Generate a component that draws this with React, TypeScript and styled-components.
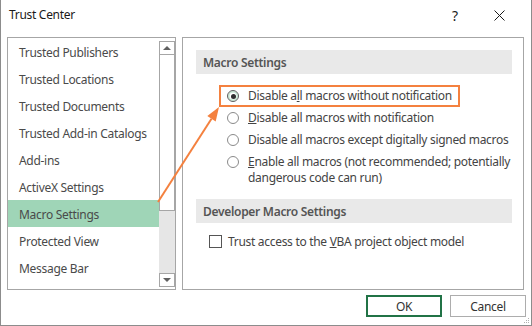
import React from 'react';
import styled, { createGlobalStyle } from 'styled-components';

const GlobalStyle = createGlobalStyle`
    html, body {
        margin: 0;
        padding: 0;
        background: #ffffff;
    }
    * {
        box-sizing: border-box;
    }
`

const StyledWindow = styled.div`
    position: relative;
    width: 532px;
    height: 326px;
    display: flex;
    flex-direction: column;
    background: #ffffff;
    border: 1px solid #8c8c8c;
    border-top: none;
    font-family: 'Segoe UI', 'Noto Sans', sans-serif;
    font-size: 12px;
    letter-spacing: -0.3px;
    color: #444444;
    overflow: hidden;
`

const StyledTitleBar = styled.header`
    height: 37px;
    display: flex;
    align-items: flex-start;
    padding: 6px 10px 0 8px;
`

const StyledTitle = styled.h1`
    flex: 1;
    margin: 0;
    font-size: 12px;
    font-weight: 400;
    line-height: 18px;
    color: #1a1a1a;
`

const StyledTitleButton = styled.span`
    flex: none;
    width: 44px;
    height: 18px;
    display: flex;
    align-items: center;
    justify-content: center;
    font-size: 14px;
    color: #1a1a1a;
`

const StyledBody = styled.main`
    display: flex;
    gap: 6px;
    padding: 0 0 0 6px;
    height: 253px;
`

const StyledNavPanel = styled.nav`
    width: 169px;
    display: flex;
    border: 1px solid #a6a6a6;
`

const StyledNavList = styled.ul`
    flex: 1;
    margin: 0;
    padding: 0;
    list-style: none;
`

const StyledNavItem = styled.li<{ $active?: boolean }>`
    height: 27px;
    display: flex;
    align-items: center;
    padding: 2px 0 0 11px;
    background: ${p => (p.$active ? '#9fd5b7' : 'transparent')};
    color: #4a4a4a;
    white-space: nowrap;
`

const StyledScrollBar = styled.div`
    width: 16px;
    display: flex;
    flex-direction: column;
    padding: 3px 0 2px 0;
`

const StyledScrollButton = styled.div`
    height: 14px;
    border: 1px solid #a6a6a6;
    background: #ffffff;
    display: flex;
    align-items: center;
    justify-content: center;
`

const StyledScrollThumb = styled.div`
    height: 156px;
    border: 1px solid #a6a6a6;
    border-top: none;
    background: #ffffff;
`

const StyledScrollTrack = styled.div`
    flex: 1;
    background: #e6e6e6;
`

const StyledArrowUp = styled.span<{ $down?: boolean }>`
    width: 0;
    height: 0;
    border-left: 4px solid transparent;
    border-right: 4px solid transparent;
    ${p => (p.$down ? 'border-top: 4px solid #606060;' : 'border-bottom: 4px solid #606060;')}
`

const StyledSettingsPanel = styled.section`
    width: 342px;
    border: 1px solid #a6a6a6;
    padding: 12px 11px 0 13px;
`

const StyledGroupHeader = styled.h2<{ $spaced?: boolean }>`
    margin: ${p => (p.$spaced ? '10px' : '0')} 0 0 0;
    height: 24px;
    padding-left: 7px;
    display: flex;
    align-items: center;
    background: #e9e9e9;
    font-size: 12px;
    font-weight: 600;
    color: #555555;
`

const StyledOptions = styled.div`
    display: flex;
    flex-direction: column;
    margin: 11px 0 0 23px;
`

const StyledOption = styled.label<{ $highlight?: boolean }>`
    width: fit-content;
    display: flex;
    align-items: flex-start;
    gap: 9px;
    padding: 1px 6px 1px 6px;
    border: 2px solid ${p => (p.$highlight ? '#f4813f' : 'transparent')};
    line-height: 16px;
    color: #444444;
    white-space: nowrap;
`

const StyledRadio = styled.span<{ $checked?: boolean }>`
    flex: none;
    position: relative;
    width: 12px;
    height: 12px;
    margin-top: 2px;
    border-radius: 50%;
    border: 1px solid ${p => (p.$checked ? '#5e5e5e' : '#8a8a8a')};
    background: #ffffff;
    box-shadow: ${p => (p.$checked ? 'inset 0 0 0 1.5px #c3e6d1' : 'none')};
    &::after {
        content: '';
        display: ${p => (p.$checked ? 'block' : 'none')};
        position: absolute;
        left: 2.5px;
        top: 2.5px;
        width: 5px;
        height: 5px;
        border-radius: 50%;
        background: #2e2e2e;
    }
`

const StyledCheckRow = styled.label`
    display: flex;
    align-items: center;
    gap: 6px;
    height: 22px;
    margin: 7px 0 0 13px;
    color: #444444;
    white-space: nowrap;
`

const StyledCheckbox = styled.span`
    width: 13px;
    height: 13px;
    border: 1px solid #555555;
    background: #ffffff;
`

const StyledFooter = styled.footer`
    display: flex;
    justify-content: flex-end;
    gap: 8px;
    padding: 5px 5px 0 0;
`

const StyledButton = styled.button<{ $primary?: boolean }>`
    width: 76px;
    height: 22px;
    margin: 0;
    padding: 0;
    font-family: inherit;
    font-size: 12px;
    letter-spacing: inherit;
    color: #333333;
    background: #ffffff;
    border: ${p => (p.$primary ? '2px solid #217346' : '1px solid #adadad')};
`

const StyledOverlay = styled.svg`
    position: absolute;
    left: -1px;
    top: 0;
    pointer-events: none;
`

const StyledGrip = styled.svg`
    position: absolute;
    right: 1px;
    bottom: 1px;
`

function App() {
    const navItems = [
        'Trusted Publishers',
        'Trusted Locations',
        'Trusted Documents',
        'Trusted Add-in Catalogs',
        'Add-ins',
        'ActiveX Settings',
        'Macro Settings',
        'Protected View',
        'Message Bar',
    ]

    return (
        <>
            <GlobalStyle />
            <StyledWindow>
                <StyledTitleBar>
                    <StyledTitle>Trust Center</StyledTitle>
                    <StyledTitleButton>?</StyledTitleButton>
                    <StyledTitleButton>
                        <svg width="11" height="11" viewBox="0 0 11 11">
                            <path d="M0.5 0.5 L10.5 10.5 M10.5 0.5 L0.5 10.5" stroke="#1a1a1a" strokeWidth="1" />
                        </svg>
                    </StyledTitleButton>
                </StyledTitleBar>

                <StyledBody>
                    <StyledNavPanel>
                        <StyledNavList>
                            {navItems.map(item => (
                                <StyledNavItem key={item} $active={item === 'Macro Settings'}>
                                    {item}
                                </StyledNavItem>
                            ))}
                        </StyledNavList>
                        <StyledScrollBar>
                            <StyledScrollButton>
                                <StyledArrowUp />
                            </StyledScrollButton>
                            <StyledScrollThumb />
                            <StyledScrollTrack />
                            <StyledScrollButton>
                                <StyledArrowUp $down />
                            </StyledScrollButton>
                        </StyledScrollBar>
                    </StyledNavPanel>

                    <StyledSettingsPanel>
                        <StyledGroupHeader>Macro Settings</StyledGroupHeader>
                        <StyledOptions>
                            <StyledOption $highlight>
                                <StyledRadio $checked />
                                <span>Disable a<u>l</u>l macros without notification</span>
                            </StyledOption>
                            <StyledOption>
                                <StyledRadio />
                                <span><u>D</u>isable all macros with notification</span>
                            </StyledOption>
                            <StyledOption>
                                <StyledRadio />
                                <span>Disable all macros except digitally signed macros</span>
                            </StyledOption>
                            <StyledOption>
                                <StyledRadio />
                                <span>
                                    <u>E</u>nable all macros (not recommended; potentially
                                    <br />
                                    dangerous code can run)
                                </span>
                            </StyledOption>
                        </StyledOptions>

                        <StyledGroupHeader $spaced>Developer Macro Settings</StyledGroupHeader>
                        <StyledCheckRow>
                            <StyledCheckbox />
                            <span>Trust access to the <u>V</u>BA project object model</span>
                        </StyledCheckRow>
                    </StyledSettingsPanel>
                </StyledBody>

                <StyledFooter>
                    <StyledButton $primary>OK</StyledButton>
                    <StyledButton>Cancel</StyledButton>
                </StyledFooter>

                <StyledGrip width="6" height="6" viewBox="0 0 6 6">
                    <rect x="4" y="0" width="1" height="1" fill="#b0b0b0" />
                    <rect x="2" y="2" width="1" height="1" fill="#b0b0b0" />
                    <rect x="4" y="2" width="1" height="1" fill="#b0b0b0" />
                    <rect x="0" y="4" width="1" height="1" fill="#b0b0b0" />
                    <rect x="2" y="4" width="1" height="1" fill="#b0b0b0" />
                    <rect x="4" y="4" width="1" height="1" fill="#b0b0b0" />
                </StyledGrip>

                <StyledOverlay width="532" height="326" viewBox="0 0 532 326">
                    <line x1="158" y1="202" x2="211.5" y2="118.8" stroke="#f4813f" strokeWidth="2" />
                    <polygon points="219,107 215.7,121.5 207.3,116.1" fill="#f4813f" />
                </StyledOverlay>
            </StyledWindow>
        </>
    )
}

export default App;
